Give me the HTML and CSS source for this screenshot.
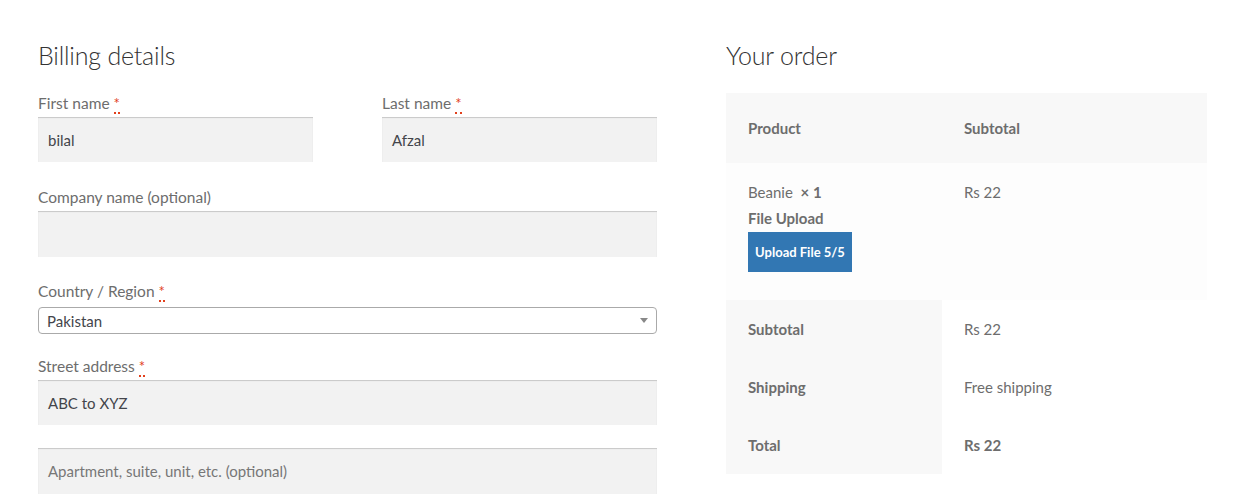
FILE: index.html
```html
<!DOCTYPE html>
<html>
<head>
<meta charset="utf-8">
<link rel="stylesheet" href="styles.css">
</head>
<body>
<div class="page">
  <div class="billing">
    <h3 class="title">Billing details</h3>
    <div class="row two">
      <div class="field">
        <label class="lbl">First name <abbr class="req">*</abbr></label>
        <div class="input">bilal</div>
      </div>
      <div class="field">
        <label class="lbl">Last name <abbr class="req">*</abbr></label>
        <div class="input">Afzal</div>
      </div>
    </div>
    <div class="field f-company">
      <label class="lbl">Company name (optional)</label>
      <div class="input tall"></div>
    </div>
    <div class="field f-country">
      <label class="lbl">Country / Region <abbr class="req">*</abbr></label>
      <div class="select"><span>Pakistan</span><span class="arrow"></span></div>
    </div>
    <div class="field f-street">
      <label class="lbl">Street address <abbr class="req">*</abbr></label>
      <div class="input">ABC to XYZ</div>
    </div>
    <div class="field">
      <div class="input tall placeholder">Apartment, suite, unit, etc. (optional)</div>
    </div>
  </div>
  <div class="order">
    <h3 class="title">Your order</h3>
    <table class="review">
      <thead>
        <tr><th class="c1">Product</th><th class="c2">Subtotal</th></tr>
      </thead>
      <tbody>
        <tr class="item">
          <td class="c1">
            <div>Beanie&nbsp; <strong>×&nbsp;1</strong></div>
            <div class="fu">File Upload</div>
            <button class="upload">Upload File 5/5</button>
          </td>
          <td class="c2">Rs 22</td>
        </tr>
      </tbody>
      <tfoot>
        <tr><th>Subtotal</th><td>Rs 22</td></tr>
        <tr><th>Shipping</th><td>Free shipping</td></tr>
        <tr><th>Total</th><td><strong>Rs 22</strong></td></tr>
      </tfoot>
    </table>
  </div>
</div>
</body>
</html>
```
FILE: styles.css
```css
* { box-sizing: border-box; }
body {
  margin: 0;
  background: #fff;
  font-family: "Lato", "Source Sans Pro", sans-serif;
  font-size: 15px;
  color: #6d6d6d;
}
.page {
  display: flex;
  gap: 69px;
  padding: 35px 0 0 38px;
}
.billing { width: 619px; }
.order { width: 481px; }
.title {
  margin: 0 0 16px;
  font-size: 25px;
  font-weight: 300;
  line-height: 40px;
  color: #333;
  letter-spacing: -0.2px;
}
.order .title { margin-bottom: 18px; }
.row.two {
  display: flex;
  gap: 69px;
}
.row.two .field { width: 275px; }
.field { margin-bottom: 23px; }
.lbl {
  display: block;
  line-height: 24px;
  margin-bottom: 2px;
  color: #6d6d6d;
  font-size: 15.5px;
}
.req {
  color: #e2401c;
  text-decoration: none;
  border-bottom: 2px dotted #e2401c;
  line-height: 1;
  font-size: 15px;
}
.input {
  height: 45px;
  background: #f2f2f2;
  box-shadow: inset 0 1px 1px rgba(0,0,0,0.18);
  padding: 0 10px;
  display: flex;
  align-items: center;
  color: #43454b;
  font-size: 15px;
}
.input.tall { height: 46px; }
.placeholder { color: #777; }
.f-company { margin-bottom: 22px; }
.f-country { margin-bottom: 20px; }
.select {
  margin-top: 4px;
  height: 27px;
  border: 1px solid #aaa;
  border-radius: 4px;
  display: flex;
  align-items: center;
  justify-content: space-between;
  padding: 0 8px 0 8px;
  color: #43454b;
  background: #fff;
}
.arrow {
  width: 0; height: 0;
  border-left: 4px solid transparent;
  border-right: 4px solid transparent;
  border-top: 5px solid #888;
}
.review {
  width: 481px;
  border-collapse: collapse;
  table-layout: fixed;
  font-size: 15px;
  margin: 0;
}
.review th, .review td {
  text-align: left;
  vertical-align: top;
  padding: 0 22px;
  color: #6d6d6d;
}
.review th { font-weight: 700; }
.review .c1 { width: 216px; }
.review thead tr { background: #f8f8f8; height: 70px; }
.review thead th { vertical-align: middle; padding-top: 0; }
.review tbody tr.item { background: #fdfdfd; height: 137px; }
.review tbody td { padding-top: 16px; line-height: 26px; }
.fu { font-weight: 700; }
.upload {
  margin-top: 1px;
  background: #3277b3;
  color: #fff;
  border: 0;
  width: 104px;
  height: 40px;
  font-family: inherit;
  font-weight: 700;
  font-size: 13px;
  padding: 0;
}
.review tfoot tr { height: 58px; }
.review tfoot th { background: #f8f8f8; vertical-align: middle; }
.review tfoot td { background: #fff; vertical-align: middle; }
strong { font-weight: 700; }
```
